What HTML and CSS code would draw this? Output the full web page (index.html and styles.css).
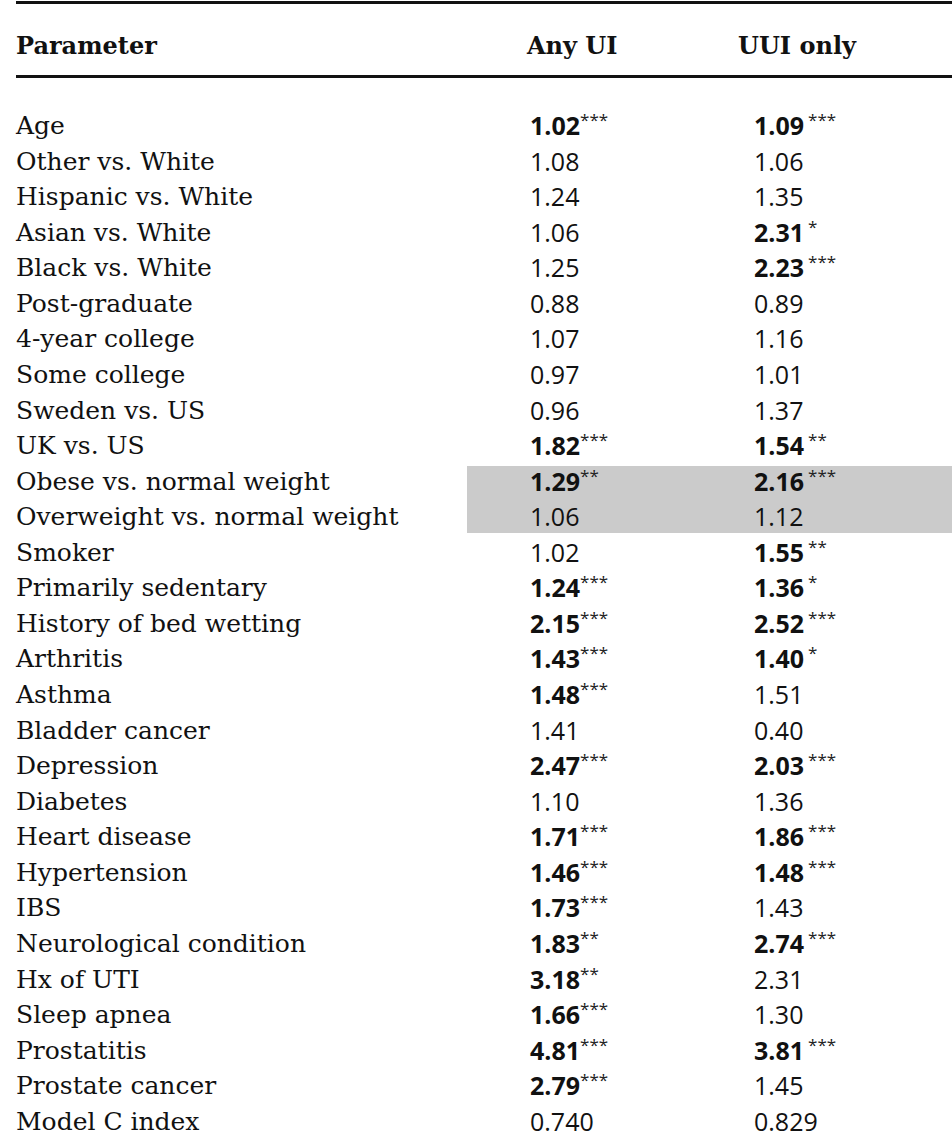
FILE: index.html
```html
<!DOCTYPE html>
<html>
<head>
<meta charset="utf-8">
<link rel="stylesheet" href="styles.css">
</head>
<body>
<div class="page">
  <div class="table">
    <div class="head">
      <div class="h h-param">Parameter</div>
      <div class="h h-any">Any UI</div>
      <div class="h h-uui">UUI only</div>
    </div>
    <div class="body">
      <div class="row"><div class="lab">Age</div><div class="v"><b>1.02</b><sup>***</sup></div><div class="v c2"><b>1.09</b><sup>***</sup></div></div>
      <div class="row"><div class="lab">Other vs. White</div><div class="v">1.08</div><div class="v c2">1.06</div></div>
      <div class="row"><div class="lab">Hispanic vs. White</div><div class="v">1.24</div><div class="v c2">1.35</div></div>
      <div class="row"><div class="lab">Asian vs. White</div><div class="v">1.06</div><div class="v c2"><b>2.31</b><sup>*</sup></div></div>
      <div class="row"><div class="lab">Black vs. White</div><div class="v">1.25</div><div class="v c2"><b>2.23</b><sup>***</sup></div></div>
      <div class="row"><div class="lab">Post-graduate</div><div class="v">0.88</div><div class="v c2">0.89</div></div>
      <div class="row"><div class="lab">4-year college</div><div class="v">1.07</div><div class="v c2">1.16</div></div>
      <div class="row"><div class="lab">Some college</div><div class="v">0.97</div><div class="v c2">1.01</div></div>
      <div class="row"><div class="lab">Sweden vs. US</div><div class="v">0.96</div><div class="v c2">1.37</div></div>
      <div class="row"><div class="lab">UK vs. US</div><div class="v"><b>1.82</b><sup>***</sup></div><div class="v c2"><b>1.54</b><sup>**</sup></div></div>
      <div class="row hl hl-top"><div class="lab">Obese vs. normal weight</div><div class="v"><b>1.29</b><sup>**</sup></div><div class="v c2"><b>2.16</b><sup>***</sup></div></div>
      <div class="row hl hl-bot"><div class="lab">Overweight vs. normal weight</div><div class="v">1.06</div><div class="v c2">1.12</div></div>
      <div class="row"><div class="lab">Smoker</div><div class="v">1.02</div><div class="v c2"><b>1.55</b><sup>**</sup></div></div>
      <div class="row"><div class="lab">Primarily sedentary</div><div class="v"><b>1.24</b><sup>***</sup></div><div class="v c2"><b>1.36</b><sup>*</sup></div></div>
      <div class="row"><div class="lab">History of bed wetting</div><div class="v"><b>2.15</b><sup>***</sup></div><div class="v c2"><b>2.52</b><sup>***</sup></div></div>
      <div class="row"><div class="lab">Arthritis</div><div class="v"><b>1.43</b><sup>***</sup></div><div class="v c2"><b>1.40</b><sup>*</sup></div></div>
      <div class="row"><div class="lab">Asthma</div><div class="v"><b>1.48</b><sup>***</sup></div><div class="v c2">1.51</div></div>
      <div class="row"><div class="lab">Bladder cancer</div><div class="v">1.41</div><div class="v c2">0.40</div></div>
      <div class="row"><div class="lab">Depression</div><div class="v"><b>2.47</b><sup>***</sup></div><div class="v c2"><b>2.03</b><sup>***</sup></div></div>
      <div class="row"><div class="lab">Diabetes</div><div class="v">1.10</div><div class="v c2">1.36</div></div>
      <div class="row"><div class="lab">Heart disease</div><div class="v"><b>1.71</b><sup>***</sup></div><div class="v c2"><b>1.86</b><sup>***</sup></div></div>
      <div class="row"><div class="lab">Hypertension</div><div class="v"><b>1.46</b><sup>***</sup></div><div class="v c2"><b>1.48</b><sup>***</sup></div></div>
      <div class="row"><div class="lab">IBS</div><div class="v"><b>1.73</b><sup>***</sup></div><div class="v c2">1.43</div></div>
      <div class="row"><div class="lab">Neurological condition</div><div class="v"><b>1.83</b><sup>**</sup></div><div class="v c2"><b>2.74</b><sup>***</sup></div></div>
      <div class="row"><div class="lab">Hx of UTI</div><div class="v"><b>3.18</b><sup>**</sup></div><div class="v c2">2.31</div></div>
      <div class="row"><div class="lab">Sleep apnea</div><div class="v"><b>1.66</b><sup>***</sup></div><div class="v c2">1.30</div></div>
      <div class="row"><div class="lab">Prostatitis</div><div class="v"><b>4.81</b><sup>***</sup></div><div class="v c2"><b>3.81</b><sup>***</sup></div></div>
      <div class="row"><div class="lab">Prostate cancer</div><div class="v"><b>2.79</b><sup>***</sup></div><div class="v c2">1.45</div></div>
      <div class="row"><div class="lab">Model C index</div><div class="v">0.740</div><div class="v c2">0.829</div></div>
    </div>
  </div>
</div>
</body>
</html>
```
FILE: styles.css
```css
html, body {
  margin: 0;
  padding: 0;
  background: #ffffff;
}
.page {
  padding: 1px 0 0 16px;
  color: #111;
}
.table {
  width: 936px;
}
.head {
  display: grid;
  grid-template-columns: 451px 224px 1fr;
  border-top: 3px solid #111;
  border-bottom: 3px solid #111;
  height: 71px;
  box-sizing: content-box;
  font-family: "DejaVu Serif", serif;
  font-weight: bold;
  font-size: 24px;
  line-height: 28px;
}
.h {
  padding-top: 28px;
}
.h-any {
  padding-left: 60px;
}
.h-uui {
  padding-left: 47px;
}
.body {
  padding-top: 30px;
}
.row {
  display: grid;
  grid-template-columns: 451px 224px 1fr;
  height: 35.57px;
  line-height: 35.57px;
}
.lab {
  font-family: "DejaVu Serif", serif;
  font-size: 25px;
  white-space: nowrap;
}
.v {
  font-family: "Open Sans", sans-serif;
  font-size: 25px;
  padding-left: 63px;
  white-space: nowrap;
}
.v b {
  font-weight: bold;
}
.v sup {
  font-size: 17px;
  line-height: 0;
  vertical-align: 9px;
  color: #222;
}
.c2 sup {
  margin-left: 4px;
}
.hl .v {
  background: #cbcbcb;
}
.hl-top .v {
  background: linear-gradient(to bottom, transparent 0, transparent 2px, #cbcbcb 2px);
}
.hl-bot .v {
  background: linear-gradient(to bottom, #cbcbcb 0, #cbcbcb calc(100% - 2px), transparent calc(100% - 2px));
}
```
